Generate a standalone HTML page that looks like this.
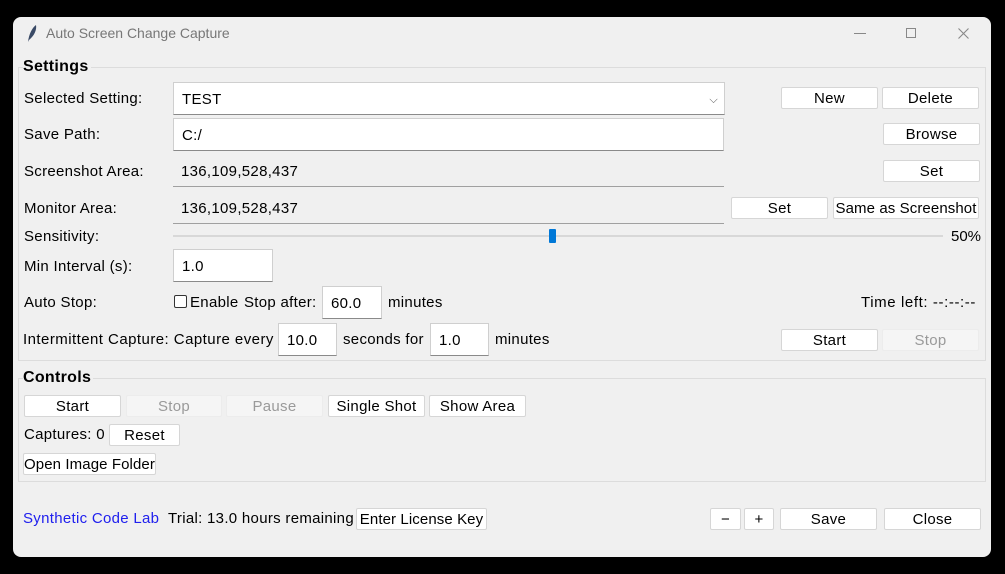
<!DOCTYPE html>
<html><head><style>
*{box-sizing:border-box;margin:0;padding:0}
body{width:1005px;height:574px;background:#000;position:relative;overflow:hidden;font-family:"Liberation Sans","Noto Sans CJK JP",sans-serif;font-size:15px;color:#000;letter-spacing:0.3px}
.win{position:absolute;left:13px;top:17px;width:978px;height:540px;background:#f0f0f0;border-radius:8px;overflow:hidden}
.a{position:absolute;white-space:nowrap;line-height:24px}
.btn{position:absolute;background:#fff;border:1px solid #d6d6d6;text-align:center;line-height:22px;height:22px;border-radius:2px;white-space:nowrap}
.dis{background:#f5f5f5;color:#9a9a9a;border-color:#ececec}
.ent{position:absolute;background:#fff;border:1px solid #cfcfcf;border-bottom:1px solid #8a8a8a;padding-left:8px;line-height:34px;height:33px}
.ro{position:absolute;background:#f0f0f0;border-bottom:1px solid #a0a0a0;padding-left:8px;line-height:35px;height:33px}
.frame{position:absolute;border:1px solid #dcdcdc}
.lbl{position:absolute;font-weight:bold;font-size:16px;background:#f0f0f0;padding-right:2px;line-height:22px}
</style></head><body>
<div class="win">
<svg style="position:absolute;left:12px;top:7px" width="14" height="20" viewBox="0 0 14 20"><path d="M3 18 C4 10 7 4 11 1 C12 6 9 12 4 16 Z" fill="#3a4a66"/></svg>
<div class="a" style="left:33px;top:4px;color:#777;font-size:14px;letter-spacing:0">Auto Screen Change Capture</div>
<div style="position:absolute;left:841px;top:16px;width:12px;height:1px;background:#888"></div>
<div style="position:absolute;left:893px;top:11px;width:10px;height:10px;border:1px solid #888"></div>
<svg style="position:absolute;left:945px;top:11px" width="11" height="11" viewBox="0 0 11 11"><path d="M0.5 0.5L10.5 10.5M10.5 0.5L0.5 10.5" stroke="#888" stroke-width="1.1"/></svg>

<div class="frame" style="left:5px;top:50px;width:968px;height:294px"></div>
<div class="lbl" style="left:10px;top:39px">Settings</div>
<div class="a" style="left:11px;top:70px">Selected Setting:</div>
<div class="ent" style="left:160px;top:65px;width:552px">TEST<span style="position:absolute;right:6px;top:0;font-size:11px;color:#555">⌵</span></div>
<div class="btn" style="left:768px;top:70px;width:97px">New</div>
<div class="btn" style="left:869px;top:70px;width:97px">Delete</div>
<div class="a" style="left:11px;top:106px">Save Path:</div>
<div class="ent" style="left:160px;top:101px;width:551px">C:/</div>
<div class="btn" style="left:870px;top:106px;width:97px">Browse</div>
<div class="a" style="left:11px;top:143px">Screenshot Area:</div>
<div class="ro" style="left:160px;top:137px;width:551px">136,109,528,437</div>
<div class="btn" style="left:870px;top:143px;width:97px">Set</div>
<div class="a" style="left:11px;top:180px">Monitor Area:</div>
<div class="ro" style="left:160px;top:174px;width:551px">136,109,528,437</div>
<div class="btn" style="left:718px;top:180px;width:97px">Set</div>
<div class="btn" style="left:820px;top:180px;width:146px;letter-spacing:0.1px">Same as Screenshot</div>
<div class="a" style="left:11px;top:208px">Sensitivity:</div>
<div style="position:absolute;left:160px;top:218px;width:770px;height:2px;background:#d8d8d8"></div>
<div style="position:absolute;left:536px;top:212px;width:7px;height:14px;background:#0078d7;border-radius:1px"></div>
<div class="a" style="left:938px;top:208px;letter-spacing:0">50%</div>
<div class="a" style="left:11px;top:238px">Min Interval (s):</div>
<div class="ent" style="left:160px;top:232px;width:100px">1.0</div>
<div class="a" style="left:11px;top:274px">Auto Stop:</div>
<div style="position:absolute;left:161px;top:278px;width:13px;height:13px;border:1px solid #333;background:#fff;border-radius:2px"></div>
<div class="a" style="left:177px;top:274px">Enable</div>
<div class="a" style="left:231px;top:274px">Stop after:</div>
<div class="ent" style="left:309px;top:269px;width:60px">60.0</div>
<div class="a" style="left:375px;top:274px">minutes</div>
<div class="a" style="right:15px;top:274px;letter-spacing:0.6px">Time left: --:--:--</div>
<div class="a" style="left:10px;top:311px;letter-spacing:0.45px">Intermittent Capture: Capture every</div>
<div class="ent" style="left:265px;top:306px;width:59px">10.0</div>
<div class="a" style="left:330px;top:311px">seconds for</div>
<div class="ent" style="left:417px;top:306px;width:59px">1.0</div>
<div class="a" style="left:482px;top:311px">minutes</div>
<div class="btn" style="left:768px;top:312px;width:97px">Start</div>
<div class="btn dis" style="left:869px;top:312px;width:97px">Stop</div>

<div class="frame" style="left:5px;top:361px;width:968px;height:104px"></div>
<div class="lbl" style="left:10px;top:350px">Controls</div>
<div class="btn" style="left:11px;top:378px;width:97px">Start</div>
<div class="btn dis" style="left:113px;top:378px;width:96px">Stop</div>
<div class="btn dis" style="left:213px;top:378px;width:97px">Pause</div>
<div class="btn" style="left:315px;top:378px;width:97px">Single Shot</div>
<div class="btn" style="left:416px;top:378px;width:97px">Show Area</div>
<div class="a" style="left:11px;top:406px">Captures: 0</div>
<div class="btn" style="left:96px;top:407px;width:71px">Reset</div>
<div class="btn" style="left:10px;top:436px;width:133px;letter-spacing:0.1px">Open Image Folder</div>

<div class="a" style="left:10px;top:490px;color:#2020ee">Synthetic Code Lab</div>
<div class="a" style="left:155px;top:490px">Trial: 13.0 hours remaining</div>
<div class="btn" style="left:343px;top:491px;width:131px;letter-spacing:0.1px">Enter License Key</div>
<div class="btn" style="left:697px;top:491px;width:31px">−</div>
<div class="btn" style="left:731px;top:491px;width:30px">+</div>
<div class="btn" style="left:767px;top:491px;width:97px">Save</div>
<div class="btn" style="left:871px;top:491px;width:97px">Close</div>
</div>
</body></html>
